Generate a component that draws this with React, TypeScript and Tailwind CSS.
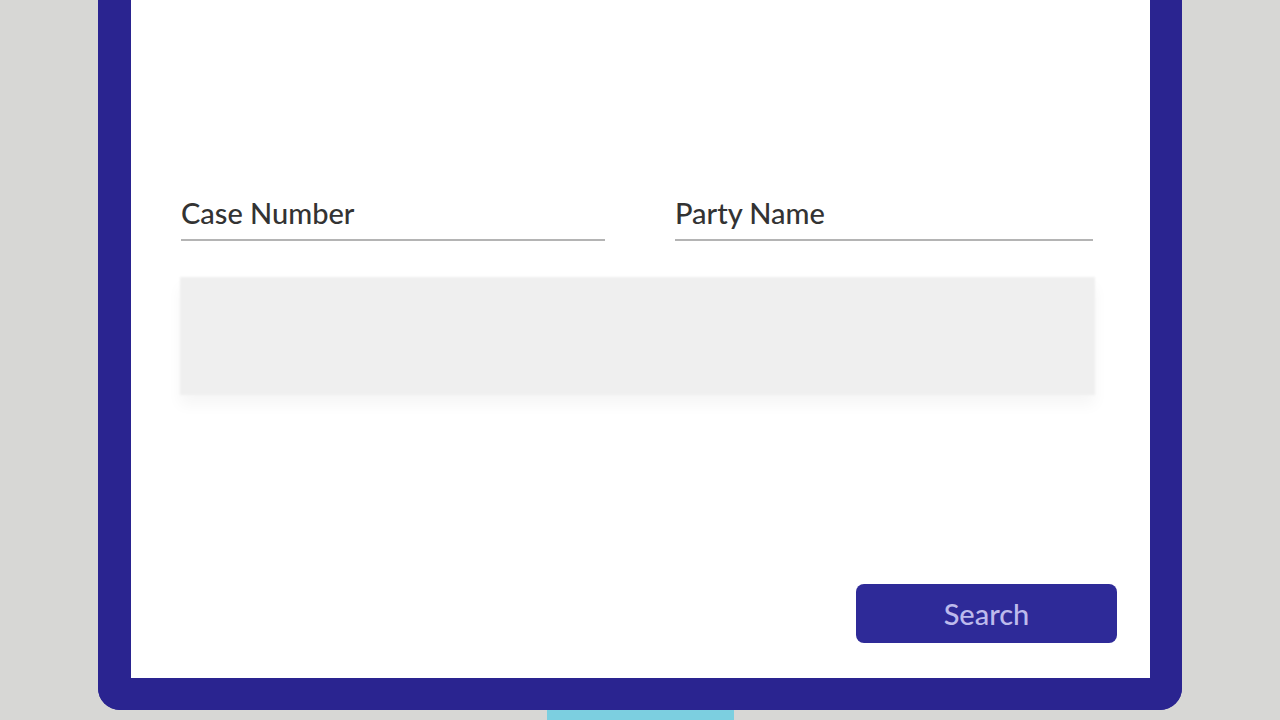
export default function App() {
  return (
    <div className="h-[720px] w-[1280px] overflow-hidden bg-[#d7d7d5] font-['Lato','Open_Sans',sans-serif]">
      {/* Monitor */}
      <div className="ml-[98px] h-[710px] w-[1084px] rounded-b-[22px] border-b-[32px] border-l-[33px] border-r-[32px] border-[#2a2490] bg-white">
        <div className="flex h-[678px] flex-col pt-[199px] pb-[35px]">
          <div className="ml-[50px] flex gap-[70px]">
            <Field label="Case Number" width="w-[424px]" />
            <Field label="Party Name" width="w-[418px]" />
          </div>

          <div className="ml-[49px] mt-[36px] h-[118px] w-[915px] bg-[#efefef] blur-[1px] shadow-[0_10px_14px_rgba(0,0,0,0.04)]" />

          <div className="mt-auto flex justify-end pr-[33px]">
            <button className="h-[59px] w-[261px] rounded-[8px] bg-[#2e2a98] text-[29px] font-medium leading-none text-[#bdbaec]">
              Search
            </button>
          </div>
        </div>
      </div>

      {/* Stand */}
      <div className="ml-[547px] h-[10px] w-[187px] bg-[#7ccfe0]" />
    </div>
  )
}

function Field({ label, width }: { label: string; width: string }) {
  return (
    <div className={width}>
      <div className="text-[29px] font-medium leading-[28px] text-[#333333]">{label}</div>
      <div className="mt-[12px] h-[2px] bg-[#b4b4b4]" />
    </div>
  )
}
